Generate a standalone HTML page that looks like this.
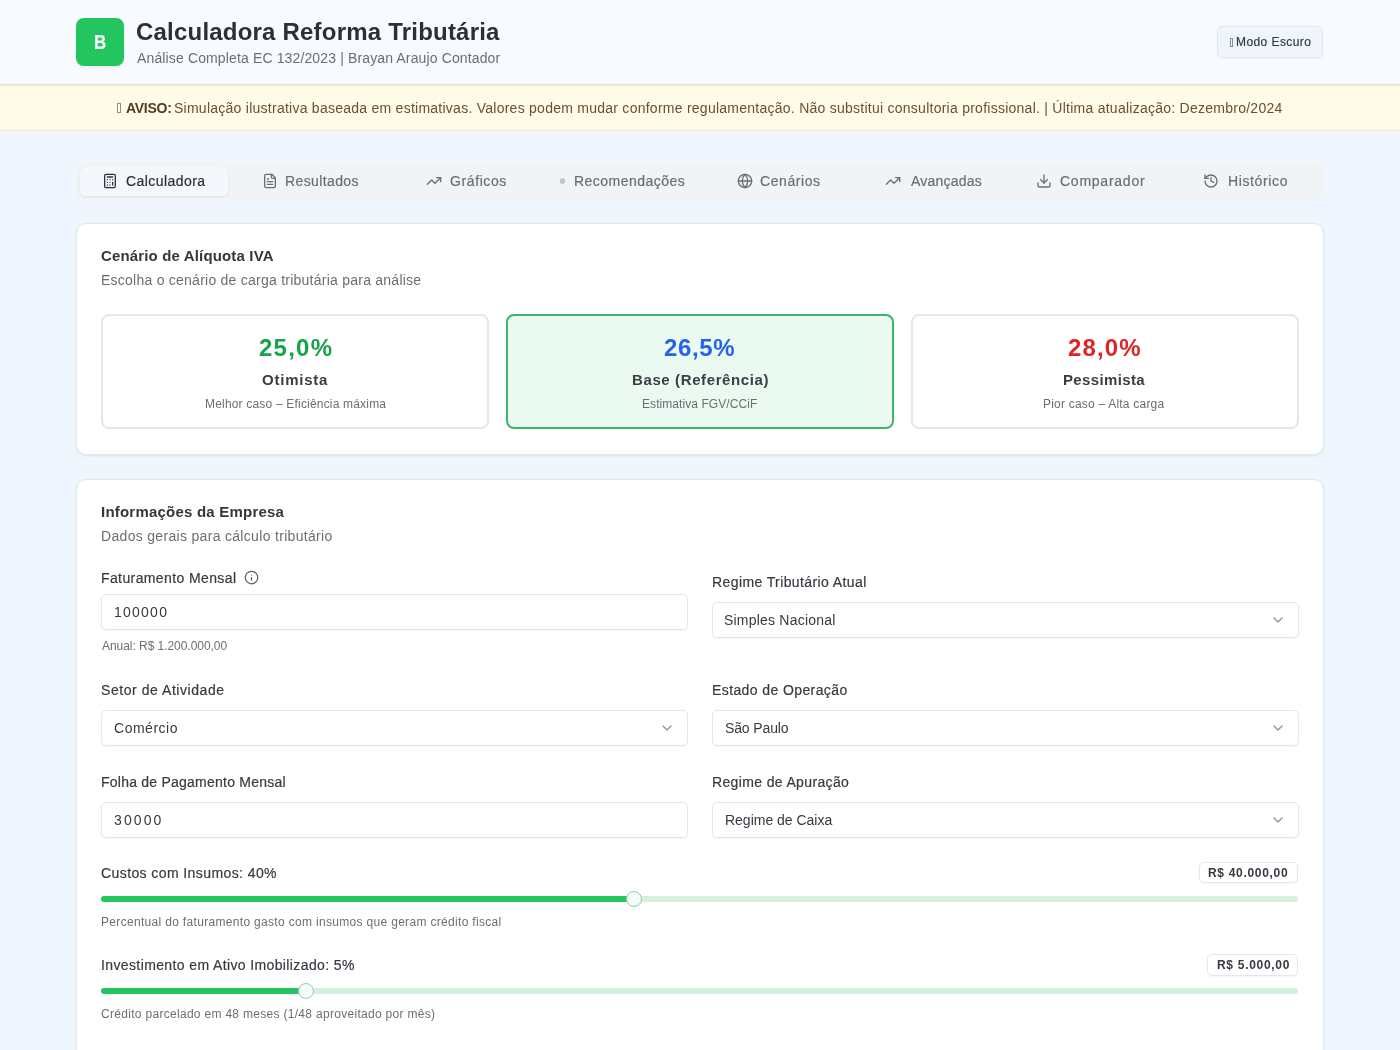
<!DOCTYPE html>
<html lang="pt-BR">
<head>
<meta charset="utf-8">
<title>Calculadora Reforma Tributária</title>
<style>
*{box-sizing:border-box;margin:0;padding:0}
html,body{width:1400px;height:1050px;overflow:hidden}
body{font-family:"Liberation Sans",sans-serif;position:relative;background:#eff6fe}
.t{position:absolute;white-space:pre;font-family:"Liberation Sans",sans-serif;will-change:transform}
.abs{position:absolute}
svg.ic{position:absolute;fill:none;stroke-linecap:round;stroke-linejoin:round}
.header{position:absolute;left:0;top:0;width:1400px;height:85px;background:#f7fafe;border-bottom:1px solid #e2e3d2}
.logo{position:absolute;left:76px;top:18px;width:48px;height:48px;border-radius:8px;background:#22c55e;box-shadow:0 2px 4px rgba(0,0,0,0.06)}
.btn{position:absolute;left:1217px;top:26px;width:106px;height:32px;border-radius:6px;background:#f0f5fc;border:1px solid #e3e8ef;box-shadow:0 1px 2px rgba(0,0,0,0.05)}
.tofu{position:absolute;border:1px solid currentColor;}
.banner{position:absolute;left:0;top:85px;width:1400px;height:46px;background:#fefbe9;border-top:1px solid #f1eed0;border-bottom:1px solid #efeec6}
.tabs{position:absolute;left:76px;top:163px;width:1248px;height:36px;border-radius:8px;background:#f1f3f5}
.tab-active{position:absolute;left:80px;top:167px;width:148px;height:29px;border-radius:6px;background:#f4f8fd;box-shadow:0 1px 3px rgba(0,0,0,0.08)}
.card{position:absolute;left:76px;width:1248px;background:#fff;border:1px solid #e3e5e8;border-radius:10px;box-shadow:0 1px 3px rgba(0,0,0,0.06),0 1px 2px rgba(0,0,0,0.03)}
.sc{position:absolute;top:314px;height:115px;border:2px solid #e5e7eb;border-radius:8px;background:#fff}
.sc.on{border-color:#3fb36c;background:#eafaf0}
.inp{position:absolute;height:36px;border:1px solid #e5e6e8;border-radius:5px;background:#fff;box-shadow:0 1px 2px rgba(0,0,0,0.04)}
.badge{position:absolute;height:22px;border:1px solid #e5e7eb;border-radius:5px;background:#fff;box-shadow:0 1px 1px rgba(0,0,0,0.03)}
.track{position:absolute;left:101px;width:1197px;height:6px;border-radius:3px;background:#d5f0df}
.fill{position:absolute;left:101px;height:6px;border-radius:3px;background:#22c55e}
.thumb{position:absolute;width:16px;height:16px;border-radius:50%;background:#f2fbf6;border:1.5px solid #9cc9ae}
</style>
</head>
<body>
<div class="header"></div>
<div class="logo"></div>
<div class="btn"></div>
<div class="tofu" style="left:1229.5px;top:38px;width:3.5px;height:8.5px;color:#8a8e95"></div>
<div class="banner"></div>
<div class="tofu" style="left:116.7px;top:103px;width:4.3px;height:10px;color:#958d80"></div>

<div class="tabs"></div>
<div class="tab-active"></div>
<!-- calculator -->
<svg class="ic" style="left:101.7px;top:173px" width="16" height="16" viewBox="0 0 24 24" stroke="#2b2f36" stroke-width="1.9"><rect width="16" height="20" x="4" y="2" rx="2"/><line x1="8" x2="16" y1="6" y2="6"/><line x1="16" x2="16" y1="14" y2="18"/><path d="M16 10h.01"/><path d="M12 10h.01"/><path d="M8 10h.01"/><path d="M12 14h.01"/><path d="M8 14h.01"/><path d="M12 18h.01"/><path d="M8 18h.01"/></svg>
<!-- file text -->
<svg class="ic" style="left:261.5px;top:173px" width="16" height="16" viewBox="0 0 24 24" stroke="#6b6e75" stroke-width="2"><path d="M15 2H6a2 2 0 0 0-2 2v16a2 2 0 0 0 2 2h12a2 2 0 0 0 2-2V7Z"/><path d="M14 2v4a2 2 0 0 0 2 2h4"/><path d="M10 9H8"/><path d="M16 13H8"/><path d="M16 17H8"/></svg>
<!-- trending up -->
<svg class="ic" style="left:425.5px;top:173px" width="16" height="16" viewBox="0 0 24 24" stroke="#6b6e75" stroke-width="2"><polyline points="22 7 13.5 15.5 8.5 10.5 2 17"/><polyline points="16 7 22 7 22 13"/></svg>
<div class="abs" style="left:560.3px;top:178px;width:5px;height:5.5px;border-radius:2.5px;background:#c2c4c8"></div>
<!-- globe -->
<svg class="ic" style="left:736.7px;top:173px" width="16" height="16" viewBox="0 0 24 24" stroke="#6b6e75" stroke-width="2"><circle cx="12" cy="12" r="10"/><path d="M12 2a14.5 14.5 0 0 0 0 20 14.5 14.5 0 0 0 0-20"/><path d="M2 12h20"/></svg>
<svg class="ic" style="left:885.2px;top:173px" width="16" height="16" viewBox="0 0 24 24" stroke="#6b6e75" stroke-width="2"><polyline points="22 7 13.5 15.5 8.5 10.5 2 17"/><polyline points="16 7 22 7 22 13"/></svg>
<!-- download -->
<svg class="ic" style="left:1035.7px;top:173px" width="16" height="16" viewBox="0 0 24 24" stroke="#6b6e75" stroke-width="2"><path d="M21 15v4a2 2 0 0 1-2 2H5a2 2 0 0 1-2-2v-4"/><polyline points="7 10 12 15 17 10"/><line x1="12" x2="12" y1="15" y2="3"/></svg>
<!-- history -->
<svg class="ic" style="left:1203.4px;top:173px" width="16" height="16" viewBox="0 0 24 24" stroke="#6b6e75" stroke-width="2"><path d="M3 12a9 9 0 1 0 9-9 9.75 9.75 0 0 0-6.74 2.74L3 8"/><path d="M3 3v5h5"/><path d="M12 7v5l4 2"/></svg>

<div class="card" style="top:223px;height:232px"></div>
<div class="sc" style="left:101px;width:388px"></div>
<div class="sc on" style="left:506px;width:388px"></div>
<div class="sc" style="left:911px;width:388px"></div>

<div class="card" style="top:479px;height:620px"></div>
<svg class="ic" style="left:244.2px;top:570.4px" width="15" height="15" viewBox="0 0 24 24" stroke="#5b5f66" stroke-width="2"><circle cx="12" cy="12" r="10"/><path d="M12 16v-4"/><path d="M12 8h.01"/></svg>
<div class="inp" style="left:101px;top:594px;width:587px"></div>
<div class="inp" style="left:712px;top:602px;width:587px"></div>
<div class="inp" style="left:101px;top:710px;width:587px"></div>
<div class="inp" style="left:712px;top:710px;width:587px"></div>
<div class="inp" style="left:101px;top:802px;width:587px"></div>
<div class="inp" style="left:712px;top:802px;width:587px"></div>
<svg class="ic" style="left:1270px;top:612px;opacity:.5" width="16" height="16" viewBox="0 0 24 24" stroke="#2a2a2a" stroke-width="2"><path d="m6 9 6 6 6-6"/></svg>
<svg class="ic" style="left:659px;top:720px;opacity:.5" width="16" height="16" viewBox="0 0 24 24" stroke="#2a2a2a" stroke-width="2"><path d="m6 9 6 6 6-6"/></svg>
<svg class="ic" style="left:1270px;top:720px;opacity:.5" width="16" height="16" viewBox="0 0 24 24" stroke="#2a2a2a" stroke-width="2"><path d="m6 9 6 6 6-6"/></svg>
<svg class="ic" style="left:1270px;top:812px;opacity:.5" width="16" height="16" viewBox="0 0 24 24" stroke="#2a2a2a" stroke-width="2"><path d="m6 9 6 6 6-6"/></svg>

<div class="badge" style="left:1199px;top:862px;width:99px;height:21px"></div>
<div class="track" style="top:896px"></div>
<div class="fill" style="top:896px;width:533px"></div>
<div class="thumb" style="left:626px;top:891px"></div>

<div class="badge" style="left:1207px;top:954px;width:91px;height:22px"></div>
<div class="track" style="top:988px"></div>
<div class="fill" style="top:988px;width:205px"></div>
<div class="thumb" style="left:298px;top:983px"></div>

<span id="t_title" class="t" style="left:136.00px;top:19.50px;font-size:24px;line-height:24px;font-weight:700;color:#2b2f36;letter-spacing:0.207px;">Calculadora Reforma Tributária</span>
<span id="t_sub" class="t" style="left:137.00px;top:50.50px;font-size:14px;line-height:14px;font-weight:400;color:#6b6e75;letter-spacing:0.135px;">Análise Completa EC 132/2023 | Brayan Araujo Contador</span>
<span id="t_logo" class="t" style="left:94.20px;top:31.90px;font-size:20px;line-height:20px;font-weight:700;color:#ffffff;letter-spacing:0.000px;transform:scaleX(0.84);transform-origin:left center;-webkit-text-stroke:0.15px #fff;">B</span>
<span id="t_modo" class="t" style="left:1235.70px;top:36.00px;font-size:12px;line-height:12px;font-weight:500;color:#363a41;letter-spacing:0.420px;-webkit-text-stroke:0.2px #363a41;">Modo Escuro</span>
<span id="t_aviso" class="t" style="left:126.20px;top:100.90px;font-size:14px;line-height:14px;font-weight:700;color:#553a22;letter-spacing:-0.280px;">AVISO:</span>
<span id="t_avisotxt" class="t" style="left:174.20px;top:100.90px;font-size:14px;line-height:14px;font-weight:400;color:#6a4f33;letter-spacing:0.254px;">Simulação ilustrativa baseada em estimativas. Valores podem mudar conforme regulamentação. Não substitui consultoria profissional. | Última atualização: Dezembro/2024</span>
<span id="t_tab1" class="t" style="left:125.70px;top:173.80px;font-size:14px;line-height:14px;font-weight:500;color:#2b2f36;letter-spacing:0.440px;-webkit-text-stroke:0.2px #2b2f36;">Calculadora</span>
<span id="t_tab2" class="t" style="left:285.00px;top:173.80px;font-size:14px;line-height:14px;font-weight:500;color:#6b6e75;letter-spacing:0.381px;-webkit-text-stroke:0.2px #6b6e75;">Resultados</span>
<span id="t_tab3" class="t" style="left:450.00px;top:173.80px;font-size:14px;line-height:14px;font-weight:500;color:#6b6e75;letter-spacing:0.602px;-webkit-text-stroke:0.2px #6b6e75;">Gráficos</span>
<span id="t_tab4" class="t" style="left:573.80px;top:173.80px;font-size:14px;line-height:14px;font-weight:500;color:#6b6e75;letter-spacing:0.467px;-webkit-text-stroke:0.2px #6b6e75;">Recomendações</span>
<span id="t_tab5" class="t" style="left:759.80px;top:173.80px;font-size:14px;line-height:14px;font-weight:500;color:#6b6e75;letter-spacing:0.572px;-webkit-text-stroke:0.2px #6b6e75;">Cenários</span>
<span id="t_tab6" class="t" style="left:910.80px;top:173.80px;font-size:14px;line-height:14px;font-weight:500;color:#6b6e75;letter-spacing:0.225px;-webkit-text-stroke:0.2px #6b6e75;">Avançadas</span>
<span id="t_tab7" class="t" style="left:1059.50px;top:173.80px;font-size:14px;line-height:14px;font-weight:500;color:#6b6e75;letter-spacing:0.756px;-webkit-text-stroke:0.2px #6b6e75;">Comparador</span>
<span id="t_tab8" class="t" style="left:1228.10px;top:173.80px;font-size:14px;line-height:14px;font-weight:500;color:#6b6e75;letter-spacing:0.625px;-webkit-text-stroke:0.2px #6b6e75;">Histórico</span>
<span id="t_c1title" class="t" style="left:101.10px;top:248.00px;font-size:15px;line-height:15px;font-weight:700;color:#34373d;letter-spacing:0.152px;">Cenário de Alíquota IVA</span>
<span id="t_c1sub" class="t" style="left:100.50px;top:272.80px;font-size:14px;line-height:14px;font-weight:400;color:#6b6e75;letter-spacing:0.244px;">Escolha o cenário de carga tributária para análise</span>
<span id="t_s1p" class="t" style="left:259.10px;top:335.70px;font-size:24px;line-height:24px;font-weight:700;color:#16a34a;letter-spacing:1.250px;">25,0%</span>
<span id="t_s1n" class="t" style="left:261.70px;top:371.70px;font-size:15px;line-height:15px;font-weight:700;color:#3a3d43;letter-spacing:0.770px;">Otimista</span>
<span id="t_s1d" class="t" style="left:205.10px;top:397.90px;font-size:12px;line-height:12px;font-weight:400;color:#6b6e75;letter-spacing:0.187px;">Melhor caso – Eficiência máxima</span>
<span id="t_s2p" class="t" style="left:664.00px;top:335.70px;font-size:24px;line-height:24px;font-weight:700;color:#2563eb;letter-spacing:0.650px;">26,5%</span>
<span id="t_s2n" class="t" style="left:631.80px;top:371.70px;font-size:15px;line-height:15px;font-weight:700;color:#3a3d43;letter-spacing:0.611px;">Base (Referência)</span>
<span id="t_s2d" class="t" style="left:641.70px;top:397.90px;font-size:12px;line-height:12px;font-weight:400;color:#6b6e75;letter-spacing:0.069px;">Estimativa FGV/CCiF</span>
<span id="t_s3p" class="t" style="left:1068.30px;top:335.70px;font-size:24px;line-height:24px;font-weight:700;color:#dc2626;letter-spacing:1.150px;">28,0%</span>
<span id="t_s3n" class="t" style="left:1063.30px;top:371.70px;font-size:15px;line-height:15px;font-weight:700;color:#3a3d43;letter-spacing:0.354px;">Pessimista</span>
<span id="t_s3d" class="t" style="left:1043.40px;top:397.90px;font-size:12px;line-height:12px;font-weight:400;color:#6b6e75;letter-spacing:0.210px;">Pior caso – Alta carga</span>
<span id="t_c2title" class="t" style="left:101.10px;top:504.00px;font-size:15px;line-height:15px;font-weight:700;color:#34373d;letter-spacing:0.215px;">Informações da Empresa</span>
<span id="t_c2sub" class="t" style="left:100.50px;top:528.70px;font-size:14px;line-height:14px;font-weight:400;color:#6b6e75;letter-spacing:0.315px;">Dados gerais para cálculo tributário</span>
<span id="t_l1" class="t" style="left:101.10px;top:570.90px;font-size:14px;line-height:14px;font-weight:500;color:#363a41;letter-spacing:0.391px;-webkit-text-stroke:0.2px #363a41;">Faturamento Mensal</span>
<span id="t_v1" class="t" style="left:113.80px;top:604.90px;font-size:14px;line-height:14px;font-weight:400;color:#363a41;letter-spacing:1.240px;">100000</span>
<span id="t_h1" class="t" style="left:102.00px;top:640.00px;font-size:12px;line-height:12px;font-weight:400;color:#6b6e75;letter-spacing:-0.047px;">Anual: R$ 1.200.000,00</span>
<span id="t_l2" class="t" style="left:711.80px;top:575.00px;font-size:14px;line-height:14px;font-weight:500;color:#363a41;letter-spacing:0.399px;-webkit-text-stroke:0.2px #363a41;">Regime Tributário Atual</span>
<span id="t_v2" class="t" style="left:724.20px;top:612.70px;font-size:14px;line-height:14px;font-weight:400;color:#363a41;letter-spacing:0.211px;">Simples Nacional</span>
<span id="t_l3" class="t" style="left:101.10px;top:683.00px;font-size:14px;line-height:14px;font-weight:500;color:#363a41;letter-spacing:0.555px;-webkit-text-stroke:0.2px #363a41;">Setor de Atividade</span>
<span id="t_v3" class="t" style="left:113.80px;top:720.90px;font-size:14px;line-height:14px;font-weight:400;color:#363a41;letter-spacing:0.515px;">Comércio</span>
<span id="t_l4" class="t" style="left:711.80px;top:683.00px;font-size:14px;line-height:14px;font-weight:500;color:#363a41;letter-spacing:0.399px;-webkit-text-stroke:0.2px #363a41;">Estado de Operação</span>
<span id="t_v4" class="t" style="left:724.80px;top:720.90px;font-size:14px;line-height:14px;font-weight:400;color:#363a41;letter-spacing:-0.126px;">São Paulo</span>
<span id="t_l5" class="t" style="left:100.50px;top:775.20px;font-size:14px;line-height:14px;font-weight:500;color:#363a41;letter-spacing:0.234px;-webkit-text-stroke:0.2px #363a41;">Folha de Pagamento Mensal</span>
<span id="t_v5" class="t" style="left:113.80px;top:812.50px;font-size:14px;line-height:14px;font-weight:400;color:#363a41;letter-spacing:2.100px;">30000</span>
<span id="t_l6" class="t" style="left:711.80px;top:775.20px;font-size:14px;line-height:14px;font-weight:500;color:#363a41;letter-spacing:0.360px;-webkit-text-stroke:0.2px #363a41;">Regime de Apuração</span>
<span id="t_v6" class="t" style="left:724.80px;top:812.50px;font-size:14px;line-height:14px;font-weight:400;color:#363a41;letter-spacing:-0.015px;">Regime de Caixa</span>
<span id="t_l7" class="t" style="left:101.10px;top:865.80px;font-size:14px;line-height:14px;font-weight:500;color:#363a41;letter-spacing:0.410px;-webkit-text-stroke:0.2px #363a41;">Custos com Insumos: 40%</span>
<span id="t_b1" class="t" style="left:1208.00px;top:866.60px;font-size:12px;line-height:12px;font-weight:700;color:#363a41;letter-spacing:0.689px;">R$ 40.000,00</span>
<span id="t_h7" class="t" style="left:101.10px;top:915.80px;font-size:12px;line-height:12px;font-weight:400;color:#6b6e75;letter-spacing:0.319px;">Percentual do faturamento gasto com insumos que geram crédito fiscal</span>
<span id="t_l8" class="t" style="left:100.80px;top:958.00px;font-size:14px;line-height:14px;font-weight:500;color:#363a41;letter-spacing:0.381px;-webkit-text-stroke:0.2px #363a41;">Investimento em Ativo Imobilizado: 5%</span>
<span id="t_b2" class="t" style="left:1216.50px;top:958.60px;font-size:12px;line-height:12px;font-weight:700;color:#363a41;letter-spacing:0.700px;">R$ 5.000,00</span>
<span id="t_h8" class="t" style="left:101.10px;top:1008.00px;font-size:12px;line-height:12px;font-weight:400;color:#6b6e75;letter-spacing:0.301px;">Crédito parcelado em 48 meses (1/48 aproveitado por mês)</span>
</body>
</html>
